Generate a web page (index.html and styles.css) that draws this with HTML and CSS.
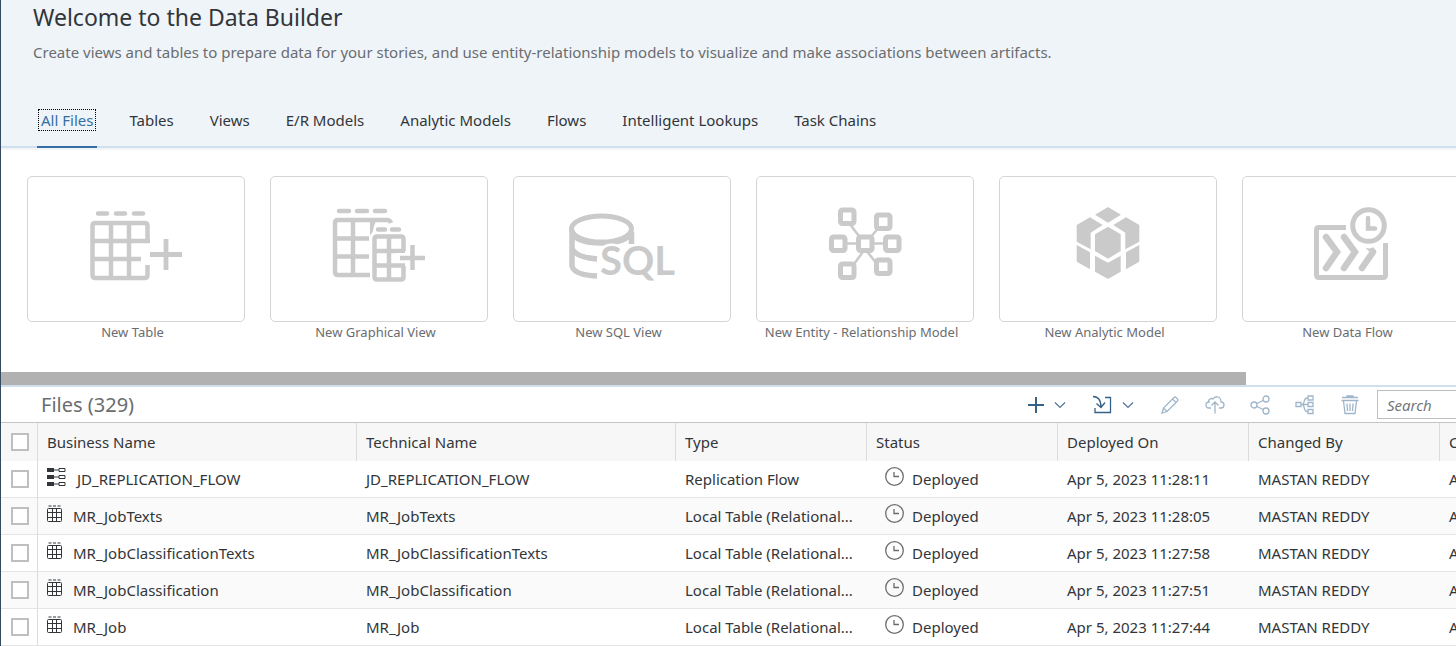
FILE: index.html
```html
<!DOCTYPE html>
<html lang="en">

<head>
    <meta charset="UTF-8">
    <meta name="viewport" content="width=device-width, initial-scale=1.0">
    <title>Data Builder</title>
    <link rel="stylesheet" href="styles.css">
</head>

<body>
    <svg class="symbols" aria-hidden="true">
        <symbol id="icon-table" viewBox="0 0 15 18">
            <path d="M1.500 1h3M6 1h3M10.500 1h3" stroke="#32363a" stroke-width="1.200" fill="none" />
            <path d="M1.500 3.500h12a1 1 0 0 1 1 1v11a1 1 0 0 1-1 1h-12a1 1 0 0 1-1-1v-11a1 1 0 0 1 1-1zM5.500 3.500v13M9.500 3.500v13M.5 7.500h14M.5 12.500h14" stroke="#32363a" fill="none" />
        </symbol>
        <symbol id="icon-clock" viewBox="0 0 19 19">
            <path d="M9.500 .7a8.800 8.800 0 1 0 0 17.600a8.800 8.800 0 1 0 0-17.600zM9 5v4.500h5" stroke="#6a6d70" stroke-width="1.300" fill="none" />
        </symbol>
        <symbol id="icon-down" viewBox="0 0 12 8">
            <path d="M1 1.500l5 5 5-5" stroke="#4f7496" stroke-width="1.200" fill="none" />
        </symbol>
    </svg>

    <div class="page">
        <header class="header">
            <h1>Welcome to the Data Builder</h1>
            <p>Create views and tables to prepare data for your stories, and use entity-relationship models to visualize and make associations between artifacts.</p>
            <nav class="tabs">
                <a href="#" class="tab active"><span>All Files</span></a>
                <a href="#" class="tab">Tables</a>
                <a href="#" class="tab">Views</a>
                <a href="#" class="tab">E/R Models</a>
                <a href="#" class="tab">Analytic Models</a>
                <a href="#" class="tab">Flows</a>
                <a href="#" class="tab">Intelligent Lookups</a>
                <a href="#" class="tab">Task Chains</a>
            </nav>
        </header>

        <section class="cards">
            <button class="card" type="button">
                <span class="card-box">
                    <svg width="140" height="110" viewBox="-5 0 140 110" fill="none" stroke="#cacaca">
                        <path d="M27 23.500h9M45 23.500h9M63 23.500h9" stroke-width="4.500" stroke-linecap="round" />
                        <path d="M76.500 53V36q0-3-3-3h-49q-3 0-3 3v49q0 3 3 3h49q3 0 3-3V75M40 33v55M58 33v55M21 51h58M21 69h49" stroke-width="4.500" />
                        <path d="M79 64.500h32M95 49v31" stroke-width="4.800" />
                    </svg>
                </span>
                <span class="card-label">New Table</span>
            </button>
            <button class="card" type="button">
                <span class="card-box">
                    <svg width="140" height="110" viewBox="-1 0 140 110" fill="none" stroke="#cacaca">
                        <path d="M29 21h10M47 21h10M65 21h10" stroke-width="4.500" stroke-linecap="round" />
                        <path d="M81 33q-1-3-4-3H28q-3 0-3 3v49q0 3 3 3h32M43 30v55M25 48.500h34M25 66.500h34" stroke-width="4.500" />
                        <path d="M60 31v14q3-2 4-9l2-5z" fill="#cacaca" stroke="none" />
                        <path d="M68 39.500h7M82 39.500h7" stroke-width="4.500" stroke-linecap="round" />
                        <path d="M93.500 61V49q0-2.500-2.500-2.500H67q-2.500 0-2.500 2.500v38q0 2.500 2.500 2.500h24q2.500 0 2.500-2.500V76M79 46v43M64 61h31M64 75.500h31" stroke-width="4.500" />
                        <path d="M86 63h14v10H86z" fill="#fff" stroke="none" />
                        <path d="M90 68h25M102.500 55v25" stroke-width="4.500" />
                    </svg>
                </span>
                <span class="card-label">New Graphical View</span>
            </button>
            <button class="card" type="button">
                <span class="card-box">
                    <svg width="140" height="110" viewBox="2 0 140 110" fill="none" stroke="#cacaca">
                        <ellipse cx="51.500" cy="39" rx="30" ry="13" stroke-width="5" />
                        <path d="M22 40v36q2 9 25 10M22 58q3 9 25 11M22 42q4 11 29.500 11t30-11v12" stroke-width="5.500" />
                        <text x="50" y="85" class="sql-text" fill="#cacaca" stroke="#fff" stroke-width="5" paint-order="stroke">SQL</text>
                    </svg>
                </span>
                <span class="card-label">New SQL View</span>
            </button>
            <button class="card" type="button">
                <span class="card-box">
                    <svg width="140" height="110" viewBox="-6 -1 140 110" fill="none" stroke="#cacaca">
                        <path d="M48 32l16 21 15-18M38 52.500h54M48 80l16-22 16 20" stroke-width="2.500" />
                        <g fill="#fff" stroke-width="5">
                            <rect x="39.500" y="19" width="13.500" height="13.500" rx="2" />
                            <rect x="75.500" y="24" width="13.500" height="13.500" rx="2" />
                            <rect x="30.500" y="46" width="13.500" height="13.500" rx="2" />
                            <rect x="57.500" y="46" width="13.500" height="13.500" rx="2" />
                            <rect x="84.500" y="46" width="13.500" height="13.500" rx="2" />
                            <rect x="39.500" y="73" width="13.500" height="13.500" rx="2" />
                            <rect x="75.500" y="69" width="13.500" height="13.500" rx="2" />
                        </g>
                    </svg>
                </span>
                <span class="card-label">New Entity - Relationship Model</span>
            </button>
            <button class="card" type="button">
                <span class="card-box">
                    <svg width="140" height="110" viewBox="0 -1 140 110" fill="#cacaca">
                        <path d="M70 16l13 7.700-13 8-13-8zM52 26.300l12.700 7.700-12 7.700v16.600l-14-7.600V34zM88 26.300L75.300 34l12 7.700v16.600l14-7.600V34zM70 35.700l12.700 7.600V60L70 67.700 57 60V43.300zM38.700 54L52 61.300v17l-13.300-7.600zM101.300 54L88 61.300v17l13.300-7.600zM57 64.700l13 7 12.700-7v16L70 88l-13-7.300z" />
                    </svg>
                </span>
                <span class="card-label">New Analytic Model</span>
            </button>
            <button class="card" type="button">
                <span class="card-box">
                    <svg width="140" height="110" viewBox="0 0 140 110" fill="none" stroke="#cacaca">
                        <path d="M65 37.500H38q-2.500 0-2.500 2.500v45q0 2.500 2.500 2.500h64q2.500 0 2.500-2.500V53" stroke-width="5" />
                        <path d="M45 47l11 15-11 16M63 47l11 15-11 16M81 78l11-16" stroke-width="6.500" stroke-linecap="round" />
                        <path d="M84 57.500q6 2 8-.5l3 4-4 3z" fill="#cacaca" stroke="none" />
                        <circle cx="87.500" cy="35.500" r="15.800" stroke-width="5" />
                        <path d="M87 28v10.500h7" stroke-width="4.500" stroke-linecap="round" />
                    </svg>
                </span>
                <span class="card-label">New Data Flow</span>
            </button>
        </section>
        <div class="scrollbar"><div class="scrollbar-thumb"></div></div>

        <section class="files">
            <div class="toolbar">
                <h2>Files (329)</h2>
                <div class="actions">
                    <button type="button" class="menu" aria-label="Add">
                        <svg width="16" height="16" viewBox="0 0 16 16"><path d="M8 0v16M0 8h16" stroke="#346187" stroke-width="2" /></svg>
                        <svg width="12" height="8"><use href="#icon-down" /></svg>
                    </button>
                    <button type="button" class="menu" aria-label="Import">
                        <svg width="20" height="20" viewBox="0 0 20 20" fill="none" stroke="#346187" stroke-width="1.300"><path d="M13 2.500h5.500v15H3V13M1 1.500q8 0 8 11M4.500 8.500l4.500 4 4-5" /></svg>
                        <svg width="12" height="8"><use href="#icon-down" /></svg>
                    </button>
                    <button type="button" disabled aria-label="Edit">
                        <svg width="20" height="20" viewBox="0 0 20 20" fill="none" stroke="#9fb6ca" stroke-width="1.300"><path d="M2 18l1.500-5L14 2.500q1-1 2 0l1.500 1.500q1 1 0 2L7 16.500zM12.500 4l3.500 3.500M3.500 13L7 16.500" /></svg>
                    </button>
                    <button type="button" disabled aria-label="Deploy">
                        <svg width="20" height="20" viewBox="0 0 20 20" fill="none" stroke="#9fb6ca" stroke-width="1.300"><path d="M6 13H4q-3 0-3-3t3-3q-1-2 1-3t3 0q2-3 5-2t3 5q3 0 3 3t-3 3h-2M10 18.500V7M6.500 10.500L10 7l3.500 3.500" /></svg>
                    </button>
                    <button type="button" disabled aria-label="Share">
                        <svg width="20" height="20" viewBox="0 0 20 20" fill="none" stroke="#9fb6ca" stroke-width="1.300"><path d="M7 8.500l6-3M7 11.500l6 3" /><circle cx="4" cy="10" r="3" /><circle cx="16" cy="4" r="3" /><circle cx="16" cy="16" r="3" /></svg>
                    </button>
                    <button type="button" disabled aria-label="Impact and lineage">
                        <svg width="20" height="20" viewBox="0 0 20 20" fill="none" stroke="#9fb6ca" stroke-width="1.300"><path d="M1 7.500h5v4H1zM13 1h5v4h-5zM13 7.500h5v4h-5zM13 14.500h5v4h-5zM6 9.500h7M13 3h-1q-2 0-3 4l-1 2.500 1 2.500q1 4.500 3 4.500h1" /></svg>
                    </button>
                    <button type="button" disabled aria-label="Delete">
                        <svg width="20" height="20" viewBox="0 0 20 20" fill="none" stroke="#9fb6ca" stroke-width="1.300"><path d="M2 2.500h16M7 2.500V1h6v1.500M3.500 6l1.500 12.500h10L16.500 6M1.500 5.500h17M7 8.500l.5 7.500M10 8.500v7.500M13 8.500l-.5 7.500" /></svg>
                    </button>
                </div>
                <input class="search" type="text" placeholder="Search" aria-label="Search">
            </div>

            <table>
                <colgroup>
                    <col class="col-check">
                    <col class="col-name">
                    <col class="col-name">
                    <col class="col-info">
                    <col class="col-info">
                    <col class="col-info">
                    <col class="col-info">
                    <col>
                </colgroup>
                <thead>
                    <tr>
                        <th><input type="checkbox" aria-label="Select all"></th>
                        <th>Business Name</th>
                        <th>Technical Name</th>
                        <th>Type</th>
                        <th>Status</th>
                        <th>Deployed On</th>
                        <th>Changed By</th>
                        <th>C</th>
                    </tr>
                </thead>
                <tbody>
                    <tr>
                        <td><input type="checkbox" aria-label="Select JD_REPLICATION_FLOW"></td>
                        <td>
                            <div class="name">
                                <svg width="19" height="20" viewBox="0 0 19 20"><path d="M0 1h7v4H0zM0 8h7v4H0zM0 15h7v4H0z" fill="#32363a" /><path d="M7 3h5M7 10h5M7 17h5M12 1.500h6v3h-6zM12 8.500h6v3h-6zM12 15.500h6v3h-6z" fill="none" stroke="#32363a" /></svg>
                                JD_REPLICATION_FLOW
                            </div>
                        </td>
                        <td>JD_REPLICATION_FLOW</td>
                        <td>Replication Flow</td>
                        <td><div class="status"><svg width="19" height="19"><use href="#icon-clock" /></svg>Deployed</div></td>
                        <td>Apr 5, 2023 11:28:11</td>
                        <td>MASTAN REDDY</td>
                        <td>A</td>
                    </tr>
                    <tr>
                        <td><input type="checkbox" aria-label="Select MR_JobTexts"></td>
                        <td><div class="name"><svg width="15" height="18"><use href="#icon-table" /></svg>MR_JobTexts</div></td>
                        <td>MR_JobTexts</td>
                        <td>Local Table (Relational...</td>
                        <td><div class="status"><svg width="19" height="19"><use href="#icon-clock" /></svg>Deployed</div></td>
                        <td>Apr 5, 2023 11:28:05</td>
                        <td>MASTAN REDDY</td>
                        <td>A</td>
                    </tr>
                    <tr>
                        <td><input type="checkbox" aria-label="Select MR_JobClassificationTexts"></td>
                        <td><div class="name"><svg width="15" height="18"><use href="#icon-table" /></svg>MR_JobClassificationTexts</div></td>
                        <td>MR_JobClassificationTexts</td>
                        <td>Local Table (Relational...</td>
                        <td><div class="status"><svg width="19" height="19"><use href="#icon-clock" /></svg>Deployed</div></td>
                        <td>Apr 5, 2023 11:27:58</td>
                        <td>MASTAN REDDY</td>
                        <td>A</td>
                    </tr>
                    <tr>
                        <td><input type="checkbox" aria-label="Select MR_JobClassification"></td>
                        <td><div class="name"><svg width="15" height="18"><use href="#icon-table" /></svg>MR_JobClassification</div></td>
                        <td>MR_JobClassification</td>
                        <td>Local Table (Relational...</td>
                        <td><div class="status"><svg width="19" height="19"><use href="#icon-clock" /></svg>Deployed</div></td>
                        <td>Apr 5, 2023 11:27:51</td>
                        <td>MASTAN REDDY</td>
                        <td>A</td>
                    </tr>
                    <tr>
                        <td><input type="checkbox" aria-label="Select MR_Job"></td>
                        <td><div class="name"><svg width="15" height="18"><use href="#icon-table" /></svg>MR_Job</div></td>
                        <td>MR_Job</td>
                        <td>Local Table (Relational...</td>
                        <td><div class="status"><svg width="19" height="19"><use href="#icon-clock" /></svg>Deployed</div></td>
                        <td>Apr 5, 2023 11:27:44</td>
                        <td>MASTAN REDDY</td>
                        <td>A</td>
                    </tr>
                </tbody>
            </table>
        </section>
    </div>
</body>

</html>
```
FILE: styles.css
```css
* {
    box-sizing: border-box;
}

body {
    margin: 0;
    font-family: "Noto Sans", sans-serif;
    font-size: 15px;
    color: #32363a;
    background-color: #fff;
    overflow: hidden;
}

.symbols {
    display: none;
}

.page {
    border-left: 1px solid #354a5f;
    overflow: hidden;
}

.header {
    background-color: #eff4f9;
    border-bottom: 2px solid #f2f5f8;
}

h1 {
    margin: 0;
    padding: 1px 32px;
    font-size: 23px;
    line-height: 32px;
    font-weight: normal;
}

.header p {
    margin: 0;
    padding: 8px 32px 0;
    line-height: 20px;
    color: #6a6d70;
    white-space: nowrap;
}

.tabs {
    display: flex;
    gap: 28px;
    padding: 48px 36px 0;
    border-bottom: 2px solid #d1e0ee;
}

.tab {
    padding: 0 4px;
    height: 36px;
    line-height: 20px;
    color: #32363a;
    text-decoration: none;
    white-space: nowrap;
}

.tab.active {
    color: #346fa3;
    padding: 0 2px;
    height: 38px;
    margin-bottom: -2px;
    border-bottom: 2px solid #346fa3;
}

.tab.active span {
    display: block;
    padding: 0 2px;
    outline: 1px dotted #000;
}

.cards {
    display: flex;
    gap: 25px;
    padding: 26px 26px 30px;
    overflow: hidden;
}

.card {
    flex: 0 0 218px;
    padding: 0;
    border: 0;
    background: none;
    font: inherit;
    font-size: 13px;
    color: #6a6d70;
}

.card-box {
    display: flex;
    align-items: center;
    justify-content: center;
    height: 146px;
    padding-bottom: 8px;
    border: 1px solid #d5d5d5;
    border-radius: 5px;
}

.card-label {
    display: block;
    padding-right: 7px;
    line-height: 20px;
}

.sql-text {
    font-family: Lato, sans-serif;
    font-size: 40px;
    font-weight: bold;
}

.scrollbar {
    height: 13px;
}

.scrollbar-thumb {
    width: 85.6%;
    height: 100%;
    background-color: #b1b1b1;
}

.files {
    border-top: 2px solid #d1e0ee;
}

.toolbar {
    display: flex;
    align-items: center;
    height: 35px;
}

h2 {
    flex: 1;
    margin: 0;
    padding-left: 40px;
    font-size: 20px;
    line-height: 32px;
    font-weight: normal;
    color: #6a6d70;
}

.actions {
    display: flex;
    align-items: center;
    gap: 25px;
    padding-right: 17px;
}

.actions button {
    display: flex;
    align-items: center;
    padding: 0;
    border: 0;
    background: none;
}

.actions .menu {
    gap: 10px;
    padding-right: 1px;
}

.search {
    width: 79px;
    height: 29px;
    padding: 0 9px;
    border: 1px solid #bfbfbf;
    border-right: 0;
    font: inherit;
}

.search::placeholder {
    color: #74777a;
    font-style: italic;
}

table {
    width: 100%;
    table-layout: fixed;
    border-collapse: separate;
    border-spacing: 0;
    border-top: 1px solid #c4c4c4;
}

.col-check {
    width: 37px;
}

.col-name {
    width: 319px;
}

.col-info {
    width: 191px;
}

th,
td {
    height: 37px;
    padding: 0 0 0 9px;
    text-align: left;
    font-weight: normal;
    white-space: nowrap;
    overflow: hidden;
}

th {
    height: 38px;
    background-color: #f7f7f7;
    border-right: 1px solid #dcdcdc;
}

th:last-child {
    border-right: 0;
}

td {
    border-bottom: 1px solid #e5e5e5;
}

th:first-child,
td:first-child {
    padding-left: 10px;
}

td:first-child {
    border-right: 1px solid #dcdcdc;
}

tbody tr:nth-child(even) {
    background-color: #fafafa;
}

input[type="checkbox"] {
    display: block;
    appearance: none;
    width: 18px;
    height: 18px;
    margin: 0;
    border: 2px solid #bfbfbf;
    background-color: #fff;
}

.name,
.status {
    display: flex;
    align-items: center;
    gap: 11px;
}

.name svg,
.status svg {
    flex: none;
    margin-bottom: 5px;
}

.status {
    gap: 8px;
    padding-left: 9px;
}
```
